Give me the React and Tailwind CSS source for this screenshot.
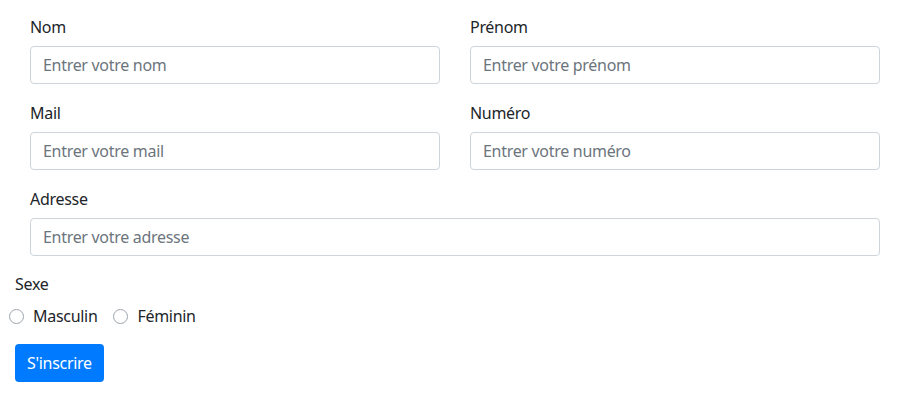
export default function App() {
    const fields = [
        { label: 'Nom', placeholder: 'Entrer votre nom' },
        { label: 'Prénom', placeholder: 'Entrer votre prénom' },
        { label: 'Mail', placeholder: 'Entrer votre mail' },
        { label: 'Numéro', placeholder: 'Entrer votre numéro' },
    ];

    return (
        <div className="min-h-screen bg-white px-[15px] pt-[14px] text-[16px] leading-6 tracking-[-0.3px] text-[#212529]" style={{ fontFamily: '"Segoe UI", "Noto Sans", sans-serif' }}>
            <div className="ml-[15px] w-[850px] grid grid-cols-2 gap-x-[30px]">
                {fields.map(f => (
                    <div key={f.label} className="mb-4">
                        <label className="block mb-2 pt-px">{f.label}</label>
                        <input
                            className="block w-full h-[38px] px-3 -mt-px border border-[#ced4da] rounded-[4px] placeholder:text-[#6c757d] outline-none"
                            placeholder={f.placeholder}
                        />
                    </div>
                ))}
                <div className="col-span-2 mb-4">
                    <label className="block mb-2 pt-px">Adresse</label>
                    <input
                        className="block w-full h-[38px] px-3 -mt-px border border-[#ced4da] rounded-[4px] placeholder:text-[#6c757d] outline-none"
                        placeholder="Entrer votre adresse"
                    />
                </div>
            </div>

            <div className="mb-4">
                <div className="mb-2">Sexe</div>
                <div className="flex items-center -ml-[6px]">
                    <label className="flex items-center mr-4">
                        <span className="w-[15px] h-[15px] rounded-full border border-[#9ea4ab] mr-[9px]"></span>
                        Masculin
                    </label>
                    <label className="flex items-center">
                        <span className="w-[15px] h-[15px] rounded-full border border-[#9ea4ab] mr-[9px]"></span>
                        Féminin
                    </label>
                </div>
            </div>

            <button className="h-[38px] px-3 bg-[#007bff] text-white rounded-[4px]">S'inscrire</button>
        </div>
    );
}
